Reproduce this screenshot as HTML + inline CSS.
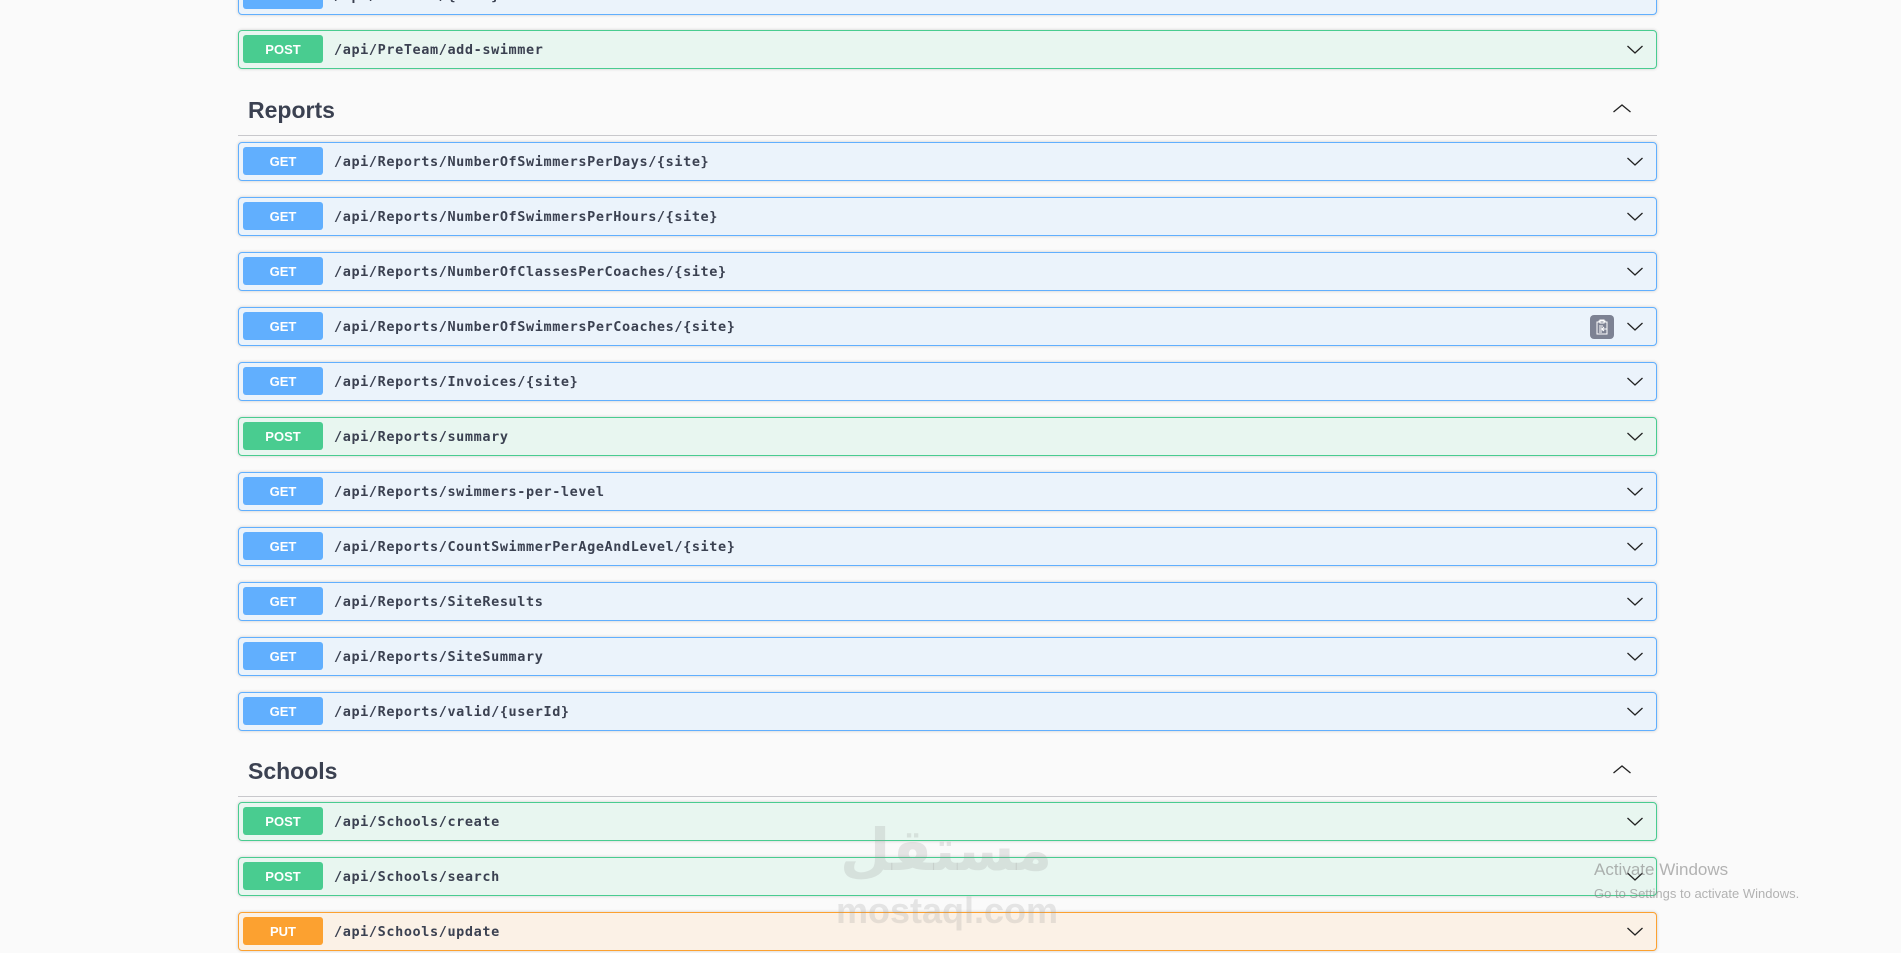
<!DOCTYPE html>
<html><head><meta charset="utf-8"><style>
body{margin:0;width:1901px;height:953px;background:#fafafa;overflow:hidden;position:relative;font-family:"Liberation Sans",sans-serif}
.op{position:absolute;left:238px;width:1417px;height:37px;border:1px solid;border-radius:4px;box-shadow:0 0 3px rgba(0,0,0,.19)}
.get{background:#ebf3fb;border-color:#61affe}.get .b{background:#61affe}
.post{background:#e8f6f0;border-color:#49cc90}.post .b{background:#49cc90}
.put{background:#fbf1e6;border-color:#fca130}.put .b{background:#fca130}
.b{position:absolute;left:4px;top:4px;width:80px;height:28px;border-radius:3px;color:#fff;font-weight:bold;font-size:13px;text-align:center;line-height:29px}
.p{position:absolute;left:95px;top:0;line-height:38px;font-family:"DejaVu Sans Mono",monospace;font-weight:bold;font-size:13.5px;letter-spacing:.6px;color:#3b4151}
.ch{position:absolute;right:12px;top:13px}
.h{position:absolute;left:248px;font-size:23px;font-weight:bold;color:#3b4151}
.ln{position:absolute;left:238px;width:1419px;height:1px;background:#c8c8cc}
</style></head><body>
<div class="op get" style="top:-24px"><div class="b">GET</div><div class="p">/api/PreTeam/{site}</div></div>
<div class="op post" style="top:30px"><div class="b">POST</div><div class="p">/api/PreTeam/add-swimmer</div><svg class="ch" width="18" height="11" viewBox="0 0 18 11"><path d="M1.5 2l7.5 7 7.5-7" fill="none" stroke="#222" stroke-width="1.3"/></svg></div>
<div class="h" style="top:97px">Reports</div>
<svg style="position:absolute;left:1612px;top:103px" width="20" height="11" viewBox="0 0 20 11"><path d="M1.5 9l8.5-7 8.5 7" fill="none" stroke="#222" stroke-width="1.3"/></svg>
<div class="ln" style="top:135px"></div>
<div id="r"></div>
<div class="h" style="top:758px">Schools</div>
<svg style="position:absolute;left:1612px;top:764px" width="20" height="11" viewBox="0 0 20 11"><path d="M1.5 9l8.5-7 8.5 7" fill="none" stroke="#222" stroke-width="1.3"/></svg>
<div class="ln" style="top:796px"></div>
<script>
var rows=[["get","GET","/api/Reports/NumberOfSwimmersPerDays/{site}"],["get","GET","/api/Reports/NumberOfSwimmersPerHours/{site}"],["get","GET","/api/Reports/NumberOfClassesPerCoaches/{site}"],["get","GET","/api/Reports/NumberOfSwimmersPerCoaches/{site}",1],["get","GET","/api/Reports/Invoices/{site}"],["post","POST","/api/Reports/summary"],["get","GET","/api/Reports/swimmers-per-level"],["get","GET","/api/Reports/CountSwimmerPerAgeAndLevel/{site}"],["get","GET","/api/Reports/SiteResults"],["get","GET","/api/Reports/SiteSummary"],["get","GET","/api/Reports/valid/{userId}"]];
var s=[["post","POST","/api/Schools/create"],["post","POST","/api/Schools/search"],["put","PUT","/api/Schools/update"]];
var h="",ch='<svg class="ch" width="18" height="11" viewBox="0 0 18 11"><path d="M1.5 2l7.5 7 7.5-7" fill="none" stroke="#222" stroke-width="1.3"/></svg>';
function mk(r,t){return '<div class="op '+r[0]+'" style="top:'+t+'px"><div class="b">'+r[1]+'</div><div class="p">'+r[2]+'</div>'+(r[3]?'<svg style="position:absolute;right:42px;top:7px" width="24" height="24" viewBox="0 0 24 24"><rect width="24" height="24" rx="4" fill="#7d8293"/><path d="M7 7h2v-1h6v1h2v12H7z M10 5h4v3h-4z M9 11h4M9 13h3M9 15h4M9 17h3M12 14h5M14 12l-2 2 2 2" fill="none" stroke="#fff" stroke-width="1"/></svg>':'')+ch+'</div>'}
rows.forEach(function(r,i){h+=mk(r,142+55*i)});
s.forEach(function(r,i){h+=mk(r,802+55*i)});
document.getElementById("r").outerHTML=h;
</script>
<div style="position:absolute;left:840px;top:816px;font-size:58px;font-weight:bold;color:rgba(150,150,150,.22);font-family:'DejaVu Sans',sans-serif">مستقل</div>
<div style="position:absolute;left:836px;top:890px;font-size:36px;font-weight:bold;color:rgba(150,150,150,.22)">mostaql.com</div>
<div style="position:absolute;left:1594px;top:860px;font-size:17px;color:rgba(130,130,130,.6)">Activate Windows</div>
<div style="position:absolute;left:1594px;top:886px;font-size:13px;color:rgba(130,130,130,.6)">Go to Settings to activate Windows.</div>
</body></html>
